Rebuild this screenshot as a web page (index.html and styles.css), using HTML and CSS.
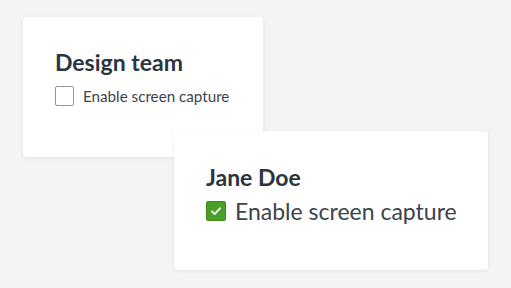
FILE: index.html
```html
<!DOCTYPE html>
<html lang="en">
<head>
    <meta charset="UTF-8">
    <title>Screen capture settings</title>
    <link rel="stylesheet" href="styles.css">
</head>
<body>
    <div class="stage">
        <div class="card card-team">
            <h2 class="card-title">Design team</h2>
            <label class="check">
                <span class="check-box"></span>
                <span class="check-label">Enable screen capture</span>
            </label>
        </div>
        <div class="card card-user">
            <h2 class="card-title">Jane Doe</h2>
            <label class="check">
                <span class="check-box checked">
                    <svg viewBox="0 0 20 20" fill="none" xmlns="http://www.w3.org/2000/svg">
                        <path d="M5.5 10.5L8.5 13.5L14.5 7" stroke="#FFFFFF" stroke-width="2" stroke-linecap="round" stroke-linejoin="round"/>
                    </svg>
                </span>
                <span class="check-label">Enable screen capture</span>
            </label>
        </div>
    </div>
</body>
</html>
```

FILE: styles.css
```css
* {
    margin: 0;
    padding: 0;
    box-sizing: border-box;
}

body {
    font-family: Lato, 'Liberation Sans', Arial, sans-serif;
    background-color: #f4f4f4;
    color: #2e3740;
    width: 511px;
    height: 288px;
    overflow: hidden;
}

.stage {
    padding: 17px 0 0 23px;
}

.card {
    background-color: #ffffff;
    border-radius: 4px;
    box-shadow: 0 1px 4px rgba(0, 0, 0, 0.08);
    padding: 32px;
    display: flex;
    flex-direction: column;
}

.card-team {
    width: 240px;
    height: 140px;
    gap: 10px;
    padding-top: 31px;
}

.card-user {
    position: relative;
    width: 314px;
    height: 139px;
    margin: -26px 0 0 151px;
    gap: 6px;
    padding: 32px 16px 32px 32px;
}

.card-title {
    font-size: 23px;
    line-height: 28px;
    font-weight: 700;
    color: #2b3540;
}

.check {
    display: flex;
    align-items: center;
    gap: 9px;
    white-space: nowrap;
}

.check-box {
    width: 19px;
    height: 20px;
    border: 1px solid #8e969e;
    border-radius: 2px;
    background-color: #ffffff;
    flex-shrink: 0;
}

.check-label {
    font-size: 15.2px;
    line-height: 20px;
    color: #3b444d;
}

/* checked state */
.check-box.checked {
    width: 20px;
    height: 20px;
    background-color: #4a9f27;
    border-color: #3e8a1f;
    display: flex;
    align-items: center;
    justify-content: center;
}

.check-box.checked svg {
    width: 18px;
    height: 18px;
}

.card-user .check-label {
    font-size: 23px;
    line-height: 28px;
}
```
